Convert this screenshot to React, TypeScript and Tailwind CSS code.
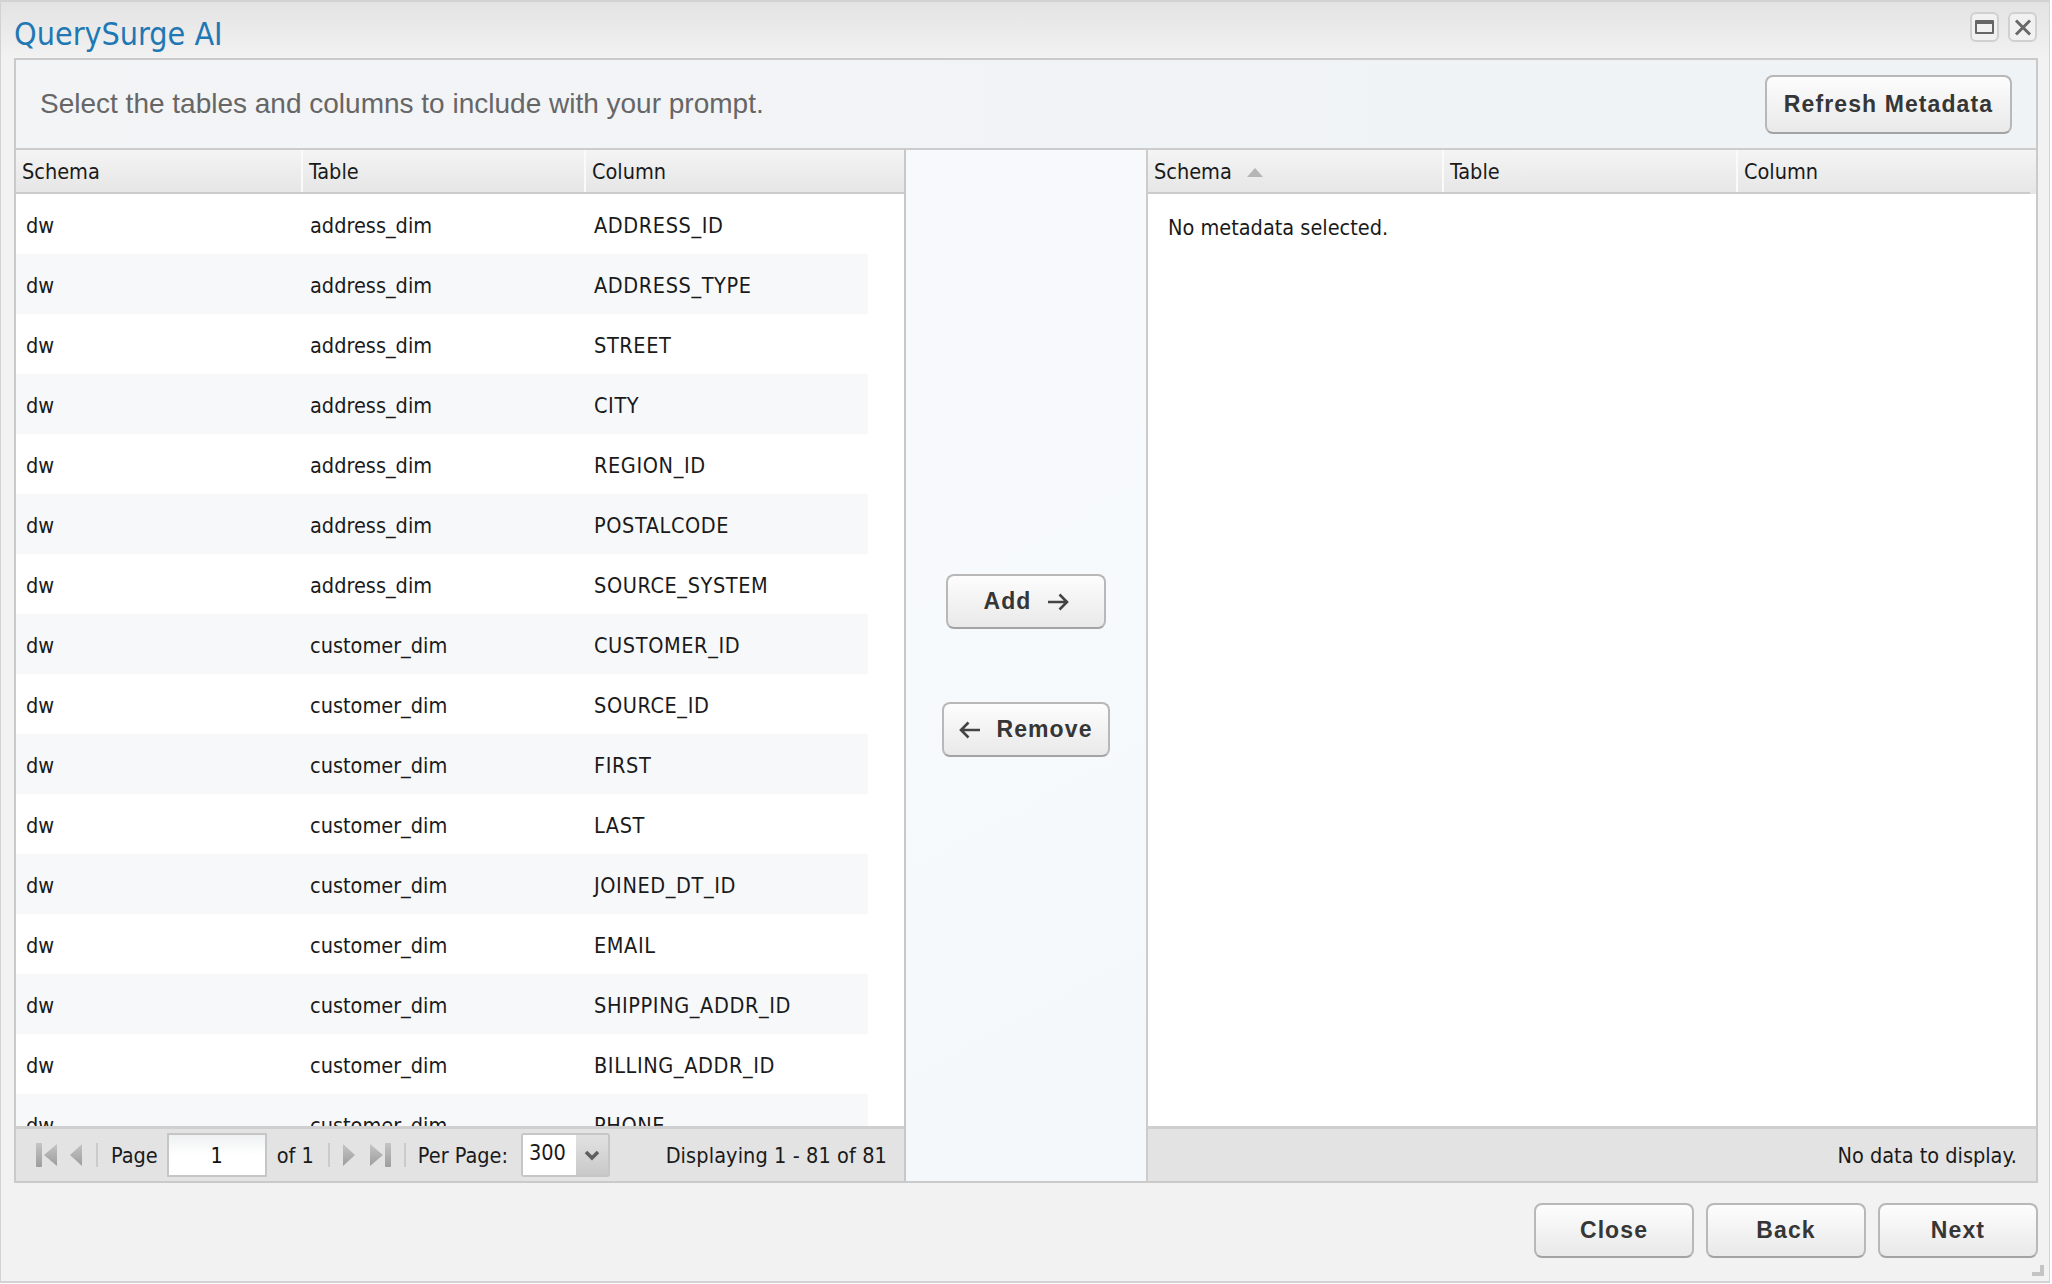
const ui = "font-['DejaVu_Sans_Condensed','DejaVu_Sans',sans-serif] [font-stretch:condensed]";

const rows: [string, string][] = [
  ["address_dim", "ADDRESS_ID"],
  ["address_dim", "ADDRESS_TYPE"],
  ["address_dim", "STREET"],
  ["address_dim", "CITY"],
  ["address_dim", "REGION_ID"],
  ["address_dim", "POSTALCODE"],
  ["address_dim", "SOURCE_SYSTEM"],
  ["customer_dim", "CUSTOMER_ID"],
  ["customer_dim", "SOURCE_ID"],
  ["customer_dim", "FIRST"],
  ["customer_dim", "LAST"],
  ["customer_dim", "JOINED_DT_ID"],
  ["customer_dim", "EMAIL"],
  ["customer_dim", "SHIPPING_ADDR_ID"],
  ["customer_dim", "BILLING_ADDR_ID"],
  ["customer_dim", "PHONE"],
];

function Btn({ children, className }: { children: React.ReactNode; className: string }) {
  return (
    <button
      className={`flex items-center justify-center h-[55px] rounded-[8px] border-2 border-[#b8b8b8] border-b-[#a3a3a3] bg-gradient-to-b from-[#fdfdfd] to-[#e9e9e9] font-['Liberation_Sans',sans-serif] font-bold text-[23px] tracking-[1.1px] text-[#363636] ${className}`}
    >
      {children}
    </button>
  );
}

function HeaderCell({ label, className, children }: { label: string; className: string; children?: React.ReactNode }) {
  return (
    <div className={`flex items-center h-full border-r-2 border-r-[#fafafa] pl-[6px] pt-[2px] ${className}`}>
      {label}
      {children}
    </div>
  );
}

function PagerIcon({ dir, bar }: { dir: "left" | "right"; bar?: boolean }) {
  return (
    <svg width={bar ? 22 : 14} height="24" viewBox={bar ? "0 0 22 24" : "0 0 14 24"} className="shrink-0">
      <defs>
        <linearGradient id="pg" x1="0" y1="0" x2="0" y2="1">
          <stop offset="0" stopColor="#c4c4c4" />
          <stop offset="1" stopColor="#9d9d9d" />
        </linearGradient>
      </defs>
      {dir === "left" ? (
        bar ? (
          <>
            <rect x="0" y="0" width="6" height="24" rx="1" fill="url(#pg)" />
            <polygon points="21,1 21,23 8,12" fill="url(#pg)" />
          </>
        ) : (
          <polygon points="13,1 13,23 1,12" fill="url(#pg)" />
        )
      ) : bar ? (
        <>
          <polygon points="1,1 1,23 14,12" fill="url(#pg)" />
          <rect x="16" y="0" width="6" height="24" rx="1" fill="url(#pg)" />
        </>
      ) : (
        <polygon points="1,1 1,23 13,12" fill="url(#pg)" />
      )}
    </svg>
  );
}

const Sep = () => <div className="w-[2px] h-[24px] bg-[#cbcbcb] shrink-0" />;

export default function App() {
  return (
    <div className={`w-[2052px] h-[1284px] bg-white ${ui} text-[21.5px] text-[#1a1a1a]`}>
      <div className="w-[2050px] h-[1283px] flex flex-col border-t-2 border-b-2 border-x border-[#d2d2d2] bg-[#f2f2f2]">
        {/* title bar */}
        <div className="h-[56px] shrink-0 flex justify-between bg-gradient-to-b from-[#e3e3e3] to-[#f2f2f2] pl-[13px] pr-[12px]">
          <div className="text-[32px] leading-[64px] text-[#1f78b4]">QuerySurge AI</div>
          <div className="flex gap-[9px] pt-[10px]">
            <div className="w-[29px] h-[30px] flex items-center justify-center rounded-[6px] border-2 border-[#d0d0d0] bg-[#f1f1f1]">
              <div className="w-[19px] h-[14px] border-2 border-t-[4px] border-[#666666] rounded-[1px]" />
            </div>
            <div className="w-[29px] h-[30px] flex items-center justify-center rounded-[6px] border-2 border-[#d0d0d0] bg-[#f1f1f1]">
              <svg width="18" height="17" viewBox="0 0 18 17" stroke="#696969" strokeWidth="3" fill="none">
                <path d="M2 1.5 16 15.5M16 1.5 2 15.5" />
              </svg>
            </div>
          </div>
        </div>

        {/* body */}
        <div className="ml-[13px] w-[2024px] h-[1125px] shrink-0 flex flex-col border-2 border-[#cacaca] bg-gradient-to-br from-[#f7f9fb] via-[#f7fafc] to-[#f3f6f9]">
          <div className="h-[90px] shrink-0 flex items-center justify-between border-b-2 border-[#cccccc] pl-[24px] pr-[24px] bg-gradient-to-r from-[#f3f4f6] to-[#eff3f6]">
            <div className="font-['Liberation_Sans',sans-serif] text-[28px] text-[#666666]">
              Select the tables and columns to include with your prompt.
            </div>
            <Btn className="w-[247px] !h-[59px]">Refresh Metadata</Btn>
          </div>

          <div className="flex-1 flex min-h-0">
            {/* left grid */}
            <div className="w-[890px] shrink-0 flex flex-col border-r-2 border-[#c8c8c8] bg-white">
              <div className="h-[44px] shrink-0 flex border-b-2 border-[#cbcbcb] bg-gradient-to-b from-[#f4f4f4] to-[#e6e6e6]">
                <HeaderCell label="Schema" className="w-[287px]" />
                <HeaderCell label="Table" className="w-[283px]" />
                <HeaderCell label="Column" className="flex-1 !border-r-0" />
              </div>
              <div className="flex-1 overflow-hidden">
                {rows.map(([table, column], i) => (
                  <div
                    key={column}
                    className={`h-[60px] w-[852px] pt-[4px] grid grid-cols-[285px_284px_1fr] items-center ${i % 2 ? "bg-[#f7f8fa]" : "bg-white"}`}
                  >
                    <div className="pl-[10px]">dw</div>
                    <div className="pl-[9px]">{table}</div>
                    <div className="pl-[9px] tracking-[0.6px]">{column}</div>
                  </div>
                ))}
              </div>
              <div className="h-[55px] shrink-0 flex items-center justify-between border-t-[3px] border-[#cfcfcf] bg-[#e3e3e3] pl-[20px] pr-[17px]">
                <div className="flex items-center">
                  <PagerIcon dir="left" bar />
                  <div className="ml-[11px]"><PagerIcon dir="left" /></div>
                  <div className="ml-[13px]"><Sep /></div>
                  <span className="ml-[13px] pt-[2px]">Page</span>
                  <div className="ml-[9px] w-[100px] h-[44px] pt-[2px] flex items-center justify-center border-2 border-[#c6c6c6] bg-gradient-to-b from-[#eef1f2] via-white to-white text-[#111111]">
                    1
                  </div>
                  <span className="ml-[10px] pt-[2px]">of 1</span>
                  <div className="ml-[14px]"><Sep /></div>
                  <div className="ml-[12px]"><PagerIcon dir="right" /></div>
                  <div className="ml-[13px]"><PagerIcon dir="right" bar /></div>
                  <div className="ml-[13px]"><Sep /></div>
                  <span className="ml-[12px] pt-[2px]">Per Page:</span>
                  <div className="ml-[13px] w-[89px] h-[44px] flex rounded-[3px] border-2 border-[#c6c6c6]">
                    <div className="w-[53px] bg-white pl-[6px] leading-[36px]">300</div>
                    <div className="flex-1 flex items-center justify-center bg-gradient-to-b from-[#e2e2e2] to-[#c9c9c9]">
                      <svg width="16" height="11" viewBox="0 0 16 11" fill="none" stroke="#5f5f5f" strokeWidth="3.5">
                        <path d="M2 2 8 8 14 2" />
                      </svg>
                    </div>
                  </div>
                </div>
                <span className="pt-[2px] tracking-[0.1px]">Displaying 1 - 81 of 81</span>
              </div>
            </div>

            {/* add / remove */}
            <div className="flex-1 flex flex-col items-center justify-center gap-[73px]">
              <Btn className="w-[160px] gap-[15px]">
                Add
                <svg width="22" height="18" viewBox="0 0 22 18" fill="none" stroke="#444444" strokeWidth="2.6">
                  <path d="M1 9H20M12.5 1.5 20 9 12.5 16.5" />
                </svg>
              </Btn>
              <Btn className="w-[168px] gap-[15px]">
                <svg width="22" height="18" viewBox="0 0 22 18" fill="none" stroke="#444444" strokeWidth="2.6">
                  <path d="M21 9H2M9.5 1.5 2 9 9.5 16.5" />
                </svg>
                Remove
              </Btn>
            </div>

            {/* right grid */}
            <div className="w-[890px] shrink-0 flex flex-col border-l-2 border-[#cccccc] bg-white">
              <div className="h-[44px] shrink-0 flex bg-gradient-to-b from-[#f4f4f4] to-[#e6e6e6]">
                <div className="w-[882px] flex h-full border-b-2 border-[#cbcbcb]">
                  <HeaderCell label="Schema" className="w-[296px]">
                    <svg width="16" height="9" viewBox="0 0 16 9" className="ml-[15px]">
                      <polygon points="8,0 16,9 0,9" fill="#b5b5b5" />
                    </svg>
                  </HeaderCell>
                  <HeaderCell label="Table" className="w-[294px]" />
                  <HeaderCell label="Column" className="flex-1 !border-r-0" />
                </div>
              </div>
              <div className="flex-1 pl-[20px] pt-[18px] leading-[32px]">No metadata selected.</div>
              <div className="h-[55px] shrink-0 pt-[2px] flex items-center justify-end border-t-[3px] border-[#cfcfcf] bg-[#e3e3e3] pr-[19px]">
                No data to display.
              </div>
            </div>
          </div>
        </div>

        {/* bottom buttons */}
        <div className="flex-1 relative flex justify-end items-start gap-[12px] pt-[20px] pr-[11px]">
          <Btn className="w-[160px]">Close</Btn>
          <Btn className="w-[160px]">Back</Btn>
          <Btn className="w-[160px]">Next</Btn>
          <div className="absolute right-[5px] bottom-[5px] w-[12px] h-[11px]">
            <div className="absolute right-0 bottom-0 w-[4px] h-[11px] bg-[#c4c4c4]" />
            <div className="absolute right-0 bottom-0 w-[12px] h-[4px] bg-[#c4c4c4]" />
          </div>
        </div>
      </div>
    </div>
  );
}
